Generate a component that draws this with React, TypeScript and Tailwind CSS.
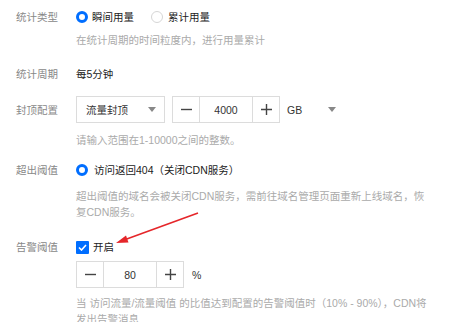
import React from 'react';

const Caret = () => (
  <svg width="8" height="5" viewBox="0 0 8 5" className="shrink-0">
    <path d="M0 0 L8 0 L4 5 Z" fill="#888" />
  </svg>
);

const Minus = () => (
  <svg width="11" height="11" viewBox="0 0 11 11">
    <path d="M0 5.5 H11" stroke="#444" strokeWidth="1.4" />
  </svg>
);

const Plus = () => (
  <svg width="11" height="11" viewBox="0 0 11 11">
    <path d="M0 5.5 H11 M5.5 0 V11" stroke="#444" strokeWidth="1.4" />
  </svg>
);

const Stepper = ({ value, input = 52, side = 27 }: { value: string; input?: number; side?: number }) => (
  <div className="flex h-[27px] border border-[#dcdcdc] bg-white">
    <div className="flex items-center justify-center border-r border-[#dcdcdc]" style={{ width: side }}>
      <Minus />
    </div>
    <div className="flex items-center justify-center text-[#333]" style={{ width: input }}>
      {value}
    </div>
    <div className="flex items-center justify-center border-l border-[#dcdcdc]" style={{ width: side }}>
      <Plus />
    </div>
  </div>
);

const Label = ({ children, h = 18 }: { children: React.ReactNode; h?: number }) => (
  <div className="w-[60px] shrink-0 flex items-center text-[#888]" style={{ height: h }}>
    {children}
  </div>
);

export default function App() {
  return (
    <div
      className="relative w-[474px] h-[322px] overflow-hidden bg-white pl-4 text-[10.5px] leading-[18px]"
      style={{ fontFamily: '"Liberation Sans", "Noto Sans CJK SC", sans-serif' }}
    >
      {/* 统计类型 */}
      <div className="flex mt-[8px]">
        <Label>统计类型</Label>
        <div className="flex flex-col">
          <div className="flex items-center h-[18px]">
            <span className="w-[12px] h-[12px] rounded-full border-[3px] border-[#006eff] bg-white" />
            <span className="ml-[4px] text-[#222]">瞬间用量</span>
            <span className="ml-[17px] w-[12px] h-[12px] rounded-full border border-[#d6d6d6] bg-white" />
            <span className="ml-[5px] text-[#222]">累计用量</span>
          </div>
          <div className="mt-[5px] text-[#aaa]">在统计周期的时间粒度内，进行用量累计</div>
        </div>
      </div>

      {/* 统计周期 */}
      <div className="flex mt-[16px]">
        <Label>统计周期</Label>
        <div className="text-[#222]">每5分钟</div>
      </div>

      {/* 封顶配置 */}
      <div className="flex mt-[13px]">
        <Label h={27}>封顶配置</Label>
        <div className="flex flex-col">
          <div className="flex items-center">
            <div className="flex items-center justify-between w-[89px] h-[27px] border border-[#dcdcdc] pl-[9px] pr-[8px] text-[#333]">
              <span>流量封顶</span>
              <Caret />
            </div>
            <div className="ml-[7px]">
              <Stepper value="4000" side={27} input={52} />
            </div>
            <span className="ml-[7px] text-[#333]">GB</span>
            <span className="ml-[26px]">
              <Caret />
            </span>
          </div>
          <div className="mt-[8px] text-[#aaa]">请输入范围在1-10000之间的整数。</div>
        </div>
      </div>

      {/* 超出阈值 */}
      <div className="flex mt-[12px]">
        <Label>超出阈值</Label>
        <div className="flex flex-col">
          <div className="flex items-center h-[18px]">
            <span className="w-[12px] h-[12px] rounded-full border-[3px] border-[#006eff] bg-white" />
            <span className="ml-[6px] text-[#222]">访问返回404（关闭CDN服务）</span>
          </div>
          <div className="mt-[9px] text-[#aaa] leading-[16px]">
            超出阈值的域名会被关闭CDN服务，需前往域名管理页面重新上线域名，恢
            <br />
            复CDN服务。
          </div>
        </div>
      </div>

      {/* 告警阈值 */}
      <div className="flex mt-[18px]">
        <Label>告警阈值</Label>
        <div className="flex flex-col">
          <div className="flex items-center h-[18px]">
            <span className="flex items-center justify-center w-[13px] h-[13px] rounded-[1px] bg-[#006eff]">
              <svg width="9" height="7" viewBox="0 0 9 7">
                <path d="M1 3.5 L3.5 6 L8 1" stroke="#fff" strokeWidth="1.6" fill="none" />
              </svg>
            </span>
            <span className="ml-[4px] text-[#222]">开启</span>
          </div>
          <div className="flex items-center mt-[5px]">
            <Stepper value="80" side={27} input={52} />
            <span className="ml-[8px] text-[#333]">%</span>
          </div>
          <div className="mt-[7px] text-[#aaa] leading-[16px]">
            当 访问流量/流量阈值 的比值达到配置的告警阈值时（10% - 90%），CDN将
            <br />
            发出告警消息
          </div>
        </div>
      </div>

      {/* red annotation arrow */}
      <svg className="absolute left-0 top-0 pointer-events-none" width="474" height="322">
        <line x1="198" y1="213" x2="124" y2="240" stroke="#e5262a" strokeWidth="1.6" />
        <path d="M116 243 L126 235.5 L128.5 242.5 Z" fill="#e5262a" />
      </svg>
    </div>
  );
}
